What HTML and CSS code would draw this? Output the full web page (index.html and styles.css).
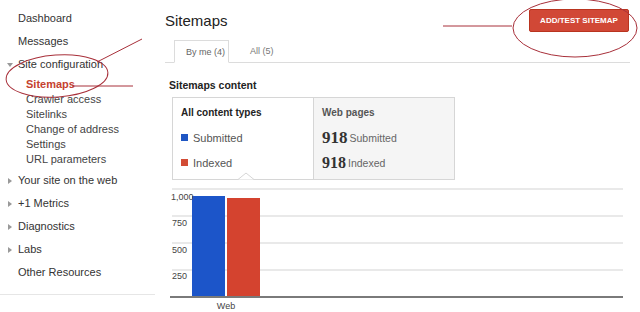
FILE: index.html
```html
<!DOCTYPE html>
<html>
<head>
<meta charset="utf-8">
<link rel="stylesheet" href="styles.css">
</head>
<body>
<div class="page">
  <nav class="sidebar">
    <div class="nav-item">Dashboard</div>
    <div class="nav-item">Messages</div>
    <div class="nav-item open"><span class="tri-down"></span>Site configuration</div>
    <div class="sub">
      <div class="sub-item active">Sitemaps</div>
      <div class="sub-item">Crawler access</div>
      <div class="sub-item">Sitelinks</div>
      <div class="sub-item">Change of address</div>
      <div class="sub-item">Settings</div>
      <div class="sub-item">URL parameters</div>
    </div>
    <div class="nav-item gap"><span class="tri-right"></span>Your site on the web</div>
    <div class="nav-item"><span class="tri-right"></span>+1 Metrics</div>
    <div class="nav-item"><span class="tri-right"></span>Diagnostics</div>
    <div class="nav-item"><span class="tri-right"></span>Labs</div>
    <div class="nav-item">Other Resources</div>
    <div class="sidebar-rule"></div>
  </nav>
  <main class="main">
    <div class="header">
      <h1 class="title">Sitemaps</h1>
      <button class="btn">ADD/TEST SITEMAP</button>
    </div>
    <div class="tabs">
      <div class="tab selected">By me (4)</div>
      <div class="tab">All (5)</div>
    </div>
    <h2 class="section">Sitemaps content</h2>
    <div class="box">
      <div class="cell left">
        <div class="row strong">All content types</div>
        <div class="row"><span class="sq blue"></span>Submitted</div>
        <div class="row"><span class="sq red"></span>Indexed</div>
        <svg class="caret" width="16" height="8" viewBox="0 0 16 8"><polyline points="0,7.5 8,1 16,7.5" fill="#fff" stroke="#d6d6d6" stroke-width="1"/></svg>
      </div>
      <div class="cell right">
        <div class="row strong grey">Web pages</div>
        <div class="row"><span class="num big">918</span><span class="lbl">Submitted</span></div>
        <div class="row"><span class="num">918</span><span class="lbl">Indexed</span></div>
      </div>
    </div>
    <svg class="chart" width="475" height="132" viewBox="0 0 475 132">
      <g stroke="#e2e2e2" stroke-width="1.5">
        <line x1="7" y1="8" x2="458" y2="8"/>
        <line x1="7" y1="35" x2="458" y2="35"/>
        <line x1="7" y1="62" x2="458" y2="62"/>
        <line x1="7" y1="89" x2="458" y2="89"/>
      </g>
      <rect x="27" y="15" width="33" height="101" fill="#1c55c9"/>
      <rect x="62" y="17" width="33" height="99" fill="#d4432f"/>
      <line x1="5" y1="116" x2="458" y2="116" stroke="#7a7a7a" stroke-width="2"/>
      <g font-family="Liberation Sans, Arial, sans-serif" font-size="9" fill="#444">
        <text x="6" y="19">1,000</text>
        <text x="7" y="45">750</text>
        <text x="7" y="72">500</text>
        <text x="7" y="98">250</text>
        <text x="61" y="128" text-anchor="middle">Web</text>
      </g>
    </svg>
  </main>
  <svg class="marks" width="640" height="312" viewBox="0 0 640 312">
    <g fill="none" stroke="#a8303a" stroke-width="1">
      <ellipse cx="57" cy="76" rx="51" ry="21" transform="rotate(-4 57 76)"/>
      <line x1="97" y1="62" x2="142" y2="39"/>
      <line x1="72" y1="86" x2="133" y2="86"/>
      <line x1="443" y1="26" x2="512" y2="26"/>
      <ellipse cx="575" cy="28" rx="62" ry="29"/>
    </g>
  </svg>
</div>
</body>
</html>
```
FILE: styles.css
```css
* { box-sizing: border-box; }
html, body { margin: 0; padding: 0; background: #fff; }
body { font-family: "Liberation Sans", Arial, sans-serif; color: #333; }
.page { position: relative; width: 640px; height: 312px; overflow: hidden; display: flex; }

.sidebar { width: 165px; flex: none; padding-top: 7px; }
.nav-item { position: relative; height: 23px; line-height: 23px; font-size: 11px; padding-left: 18px; color: #333; }
.nav-item.gap { margin-top: 2px; }
.sub { padding-left: 26px; padding-top: 1px; }
.sub-item { height: 15px; line-height: 15px; font-size: 11px; color: #444; }
.sub-item.active { color: #c5412f; font-weight: bold; }
.tri-right { position: absolute; left: 8px; top: 9px; width: 0; height: 0; border-top: 3px solid transparent; border-bottom: 3px solid transparent; border-left: 4px solid #999; }
.tri-down { position: absolute; left: 7px; top: 10px; width: 0; height: 0; border-left: 3px solid transparent; border-right: 3px solid transparent; border-top: 4px solid #999; }
.sidebar-rule { width: 155px; margin-top: 10px; border-top: 1px solid #e6e6e6; }

.main { flex: 1; min-width: 0; }
.header { display: flex; justify-content: space-between; align-items: center; height: 23px; margin-top: 9px; padding-right: 11px; }
.title { margin: 0; font-size: 15px; font-weight: normal; color: #222; line-height: 20px; }
.btn { width: 100px; height: 23px; padding: 0; background: #d14836; border: 1px solid #b9341f; color: #fff; font-family: "Liberation Sans", Arial, sans-serif; font-size: 8px; font-weight: bold; border-radius: 2px; }

.tabs { display: flex; align-items: flex-end; margin-top: 9px; height: 22px; border-bottom: 1px solid #dcdcdc; margin-right: 10px; padding-left: 9px; }
.tab { height: 22px; line-height: 22px; font-size: 9px; color: #777; padding: 0 12px; }
.tab.selected { width: 55px; border: 1px solid #dcdcdc; border-bottom: 1px solid #fff; margin-bottom: -1px; height: 23px; color: #666; padding: 0 0 0 11px; margin-right: 9px; }

.section { margin: 15px 0 0 4px; font-size: 10.5px; font-weight: bold; color: #222; line-height: 14px; }

.box { display: flex; margin: 5px 0 0 7px; width: 283px; height: 83px; border: 1px solid #d6d6d6; }
.cell { position: relative; padding: 2px 0 0 8px; }
.cell.left { width: 141px; border-right: 1px solid #d6d6d6; background: #fff; }
.cell.right { flex: 1; background: #f5f5f5; }
.row { height: 25px; display: flex; align-items: center; font-size: 11px; color: #555; }
.row.strong { font-weight: bold; font-size: 10px; color: #222; }
.row.strong.grey { color: #555; }
.sq { width: 7px; height: 7px; margin-right: 5px; display: inline-block; }
.sq.blue { background: #1f56c3; }
.sq.red { background: #d24c35; }
.num { font-family: "Liberation Serif", "Times New Roman", serif; font-weight: bold; font-size: 17px; color: #333; margin-right: 2px; }
.num:not(.big) { font-size: 16px; }
.lbl { font-size: 10.5px; color: #666; }
.caret { position: absolute; left: 65px; bottom: -1px; }

.chart { display: block; margin-top: 1px; }
.marks { position: absolute; left: 0; top: 0; pointer-events: none; }
```
